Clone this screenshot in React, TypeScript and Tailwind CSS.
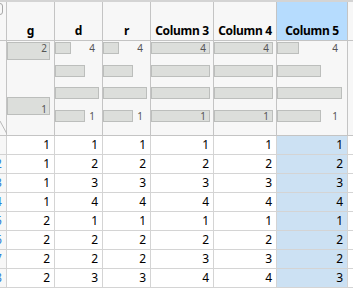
import React from "react";

type Col = { name: string; w: string; bars: { top: number; h: number; w: number }[]; topLabel: string; botLabel: string; labelRight: number; };

const four = (ws: number[]) => [
  { top: 1, h: 12, w: ws[0] },
  { top: 24, h: 12, w: ws[1] },
  { top: 46, h: 12, w: ws[2] },
  { top: 69, h: 12, w: ws[3] },
];

const cols: Col[] = [
  { name: "g", w: "w-[48px]", bars: [{ top: 1, h: 18, w: 43 }, { top: 56, h: 18, w: 43 }], topLabel: "2", botLabel: "1", labelRight: 7 },
  { name: "d", w: "w-[48px]", bars: four([16, 30, 44, 30]), topLabel: "4", botLabel: "1", labelRight: 7 },
  { name: "r", w: "w-[48px]", bars: four([16, 30, 44, 30]), topLabel: "4", botLabel: "1", labelRight: 7 },
  { name: "Column 3", w: "w-[63px]", bars: four([59, 59, 59, 59]), topLabel: "4", botLabel: "1", labelRight: 7 },
  { name: "Column 4", w: "w-[63px]", bars: four([59, 59, 59, 59]), topLabel: "4", botLabel: "1", labelRight: 7 },
  { name: "Column 5", w: "w-[71px]", bars: four([22, 44, 65, 44]), topLabel: "4", botLabel: "1", labelRight: 9 },
];

const data = [
  [1, 1, 1, 1, 1, 1],
  [1, 2, 2, 2, 2, 2],
  [1, 3, 3, 3, 3, 3],
  [1, 4, 4, 4, 4, 4],
  [2, 1, 1, 1, 1, 1],
  [2, 2, 2, 2, 2, 2],
  [2, 2, 2, 3, 3, 2],
  [2, 3, 3, 4, 4, 3],
];

export default function App() {
  return (
    <div className="w-[353px] h-[294px] overflow-hidden bg-white border-t-2 border-[#d4d4d4]" style={{ fontFamily: '"Noto Sans", "Open Sans", sans-serif' }}>
      <div className="flex ml-[-10px]">
        {/* row number column */}
        <div className="flex flex-col w-[17px] shrink-0">
          <div className="relative h-[39px] bg-[#f7f7f7] border-r border-b border-[#c4c4c4]">
            <div className="absolute left-[3px] top-[1px] w-[10px] h-[12px] rounded-[3px] border border-[#a8a8a8]" />
          </div>
          <div className="relative h-[95px] bg-[#f7f7f7] border-r border-b border-[#c4c4c4]">
            <svg className="absolute left-[10px] top-[80px]" width="7" height="14" viewBox="0 0 7 14">
              <line x1="0" y1="0" x2="7" y2="13" stroke="#b8b8b8" strokeWidth="1" />
            </svg>
          </div>
          {data.map((_, i) => (
            <div key={i} className="h-[19px] bg-[#f7f7f7] border-r border-b border-[#d2d2d2] text-[12px] leading-[18px] text-center text-[#2a7ed8] pl-[1px]">
              {i + 1}
            </div>
          ))}
        </div>
        {cols.map((c, ci) => (
          <div key={c.name} className={`flex flex-col shrink-0 ${c.w}`}>
            <div className={`h-[39px] border-r border-b border-[#c4c4c4] flex items-end justify-center pb-[1px] ${ci === 5 ? "bg-[#b6dcfe]" : "bg-[#f7f7f7]"}`}>
              <span className="text-[12px] font-bold leading-[16px] text-black tracking-[-0.3px]">{c.name}</span>
            </div>
            <div className="relative h-[95px] bg-[#f7f7f7] border-r border-b border-[#c4c4c4]">
              {c.bars.map((b, bi) => (
                <div
                  key={bi}
                  className="absolute left-0 bg-[#dcdedb] border border-[#bcbebc]"
                  style={{ top: b.top, height: b.h, width: b.w }}
                />
              ))}
              <span
                className="absolute text-[10px] leading-[10px] text-[#555]"
                style={{ top: c.bars[0].top + 1, right: c.labelRight }}
              >
                {c.topLabel}
              </span>
              <span
                className="absolute text-[10px] leading-[10px] text-[#555]"
                style={{ top: c.bars[c.bars.length - 1].top + c.bars[c.bars.length - 1].h - 11, right: c.labelRight }}
              >
                {c.botLabel}
              </span>
            </div>
            {data.map((row, ri) => (
              <div
                key={ri}
                className={`h-[19px] border-r border-b border-[#d4d4d4] text-[12px] leading-[18px] text-right pr-[4px] text-black ${ci === 5 ? "bg-[#cce1f3]" : "bg-white"}`}
              >
                {row[ci]}
              </div>
            ))}
          </div>
        ))}
        <div className="flex flex-col w-[40px] shrink-0">
          <div className="h-[39px] bg-[#f7f7f7] border-b border-[#c4c4c4]" />
          <div className="h-[95px] bg-[#f7f7f7] border-b border-[#c4c4c4]" />
          {data.map((_, i) => (
            <div key={i} className="h-[19px] bg-white border-b border-[#d4d4d4]" />
          ))}
        </div>
      </div>
    </div>
  );
}
